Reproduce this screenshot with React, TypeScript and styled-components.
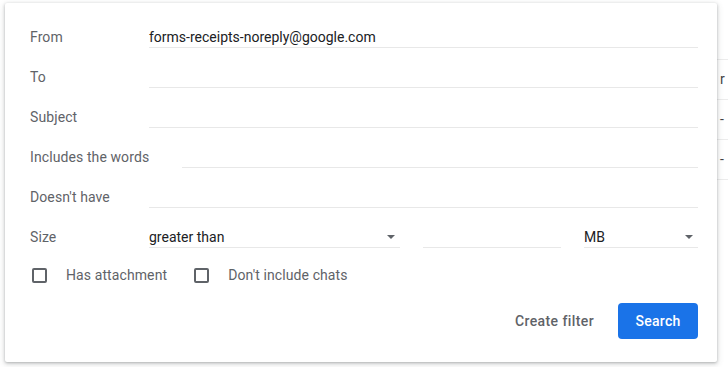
import React from "react";
import styled, { createGlobalStyle } from "styled-components";

const GlobalStyle = createGlobalStyle`
  html, body {
    margin: 0;
    padding: 0;
    background: #fff;
    font-family: Roboto, "Liberation Sans", Arial, sans-serif;
  }
`;

const Page = styled.div`
  display: flex;
  align-items: flex-start;
  width: 728px;
  height: 367px;
  overflow: hidden;
`;

const Dialog = styled.div`
  position: relative;
  z-index: 1;
  flex: 0 0 712px;
  box-sizing: border-box;
  margin: 3px 0 0 5px;
  height: 359px;
  padding: 17px 19px 0 25px;
  background: #fff;
  border-radius: 2px;
  box-shadow: 0 1px 3px rgba(60, 64, 67, 0.35), 0 2px 6px 1px rgba(60, 64, 67, 0.12);
  display: flex;
  flex-direction: column;
`;

const Backdrop = styled.div`
  flex: 1;
  padding-top: 59px;
  display: flex;
  flex-direction: column;
`;

const BackdropRow = styled.div`
  height: 39px;
  border-top: 1px solid #ececec;
  padding-left: 3px;
  font-size: 14px;
  line-height: 39px;
  color: #444;
  white-space: nowrap;
`;

const Row = styled.div`
  display: flex;
  align-items: flex-start;
  margin-bottom: 12px;
`;

const Label = styled.div<{ $wide?: boolean }>`
  flex: 0 0 ${(p) => (p.$wide ? "152px" : "119px")};
  padding-top: 7px;
  font-size: 14px;
  line-height: 20px;
  letter-spacing: 0.1px;
  color: #5f6368;
`;

const Field = styled.div<{ $width?: number }>`
  ${(p) => (p.$width ? `flex: 0 0 ${p.$width}px;` : "flex: 1;")}
  box-sizing: border-box;
  height: 28px;
  padding-top: 7px;
  border-bottom: 1px solid #e8e8e8;
  font-size: 14px;
  line-height: 20px;
  color: #202124;
  display: flex;
  justify-content: space-between;
  align-items: flex-start;
`;

const SizeGroup = styled.div`
  flex: 1;
  display: flex;
  gap: 23px;
`;

const Arrow = styled.span`
  width: 0;
  height: 0;
  margin: 8px 5px 0 0;
  border-left: 4px solid transparent;
  border-right: 4px solid transparent;
  border-top: 4px solid #5f6368;
`;

const Checks = styled.div`
  display: flex;
  align-items: center;
  margin-top: 5px;
  padding-left: 2px;
`;

const CheckItem = styled.label`
  display: flex;
  align-items: center;
  gap: 19px;
  margin-right: 27px;
  font-size: 14px;
  line-height: 20px;
  letter-spacing: 0.1px;
  color: #5f6368;
`;

const Box = styled.span`
  box-sizing: border-box;
  width: 15px;
  height: 15px;
  border: 2px solid #5f6368;
  border-radius: 2px;
`;

const Actions = styled.div`
  display: flex;
  justify-content: flex-end;
  align-items: center;
  gap: 24px;
  margin-top: 18px;
`;

const TextButton = styled.button`
  border: none;
  background: none;
  padding: 0;
  font-family: inherit;
  font-size: 14px;
  font-weight: 500;
  letter-spacing: 0.4px;
  color: #5f6368;
  cursor: pointer;
`;

const PrimaryButton = styled.button`
  width: 80px;
  height: 36px;
  border: none;
  border-radius: 4px;
  background: #1a73e8;
  color: #fff;
  font-family: inherit;
  font-size: 14px;
  font-weight: 500;
  letter-spacing: 0.3px;
  cursor: pointer;
`;

const rows = [
  { label: "From", value: "forms-receipts-noreply@google.com" },
  { label: "To", value: "" },
  { label: "Subject", value: "" },
  { label: "Includes the words", value: "", wide: true },
  { label: "Doesn't have", value: "" },
];

const App: React.FC = () => {
  return (
    <>
      <GlobalStyle />
      <Page>
        <Dialog>
          {rows.map((r) => (
            <Row key={r.label}>
              <Label $wide={r.wide}>{r.label}</Label>
              <Field>{r.value}</Field>
            </Row>
          ))}
          <Row>
            <Label>Size</Label>
            <SizeGroup>
              <Field $width={251}>
                greater than
                <Arrow />
              </Field>
              <Field $width={138} />
              <Field>
                MB
                <Arrow />
              </Field>
            </SizeGroup>
          </Row>
          <Checks>
            <CheckItem>
              <Box />
              Has attachment
            </CheckItem>
            <CheckItem>
              <Box />
              Don't include chats
            </CheckItem>
          </Checks>
          <Actions>
            <TextButton>Create filter</TextButton>
            <PrimaryButton>Search</PrimaryButton>
          </Actions>
        </Dialog>
        <Backdrop>
          <BackdropRow>r</BackdropRow>
          <BackdropRow>-</BackdropRow>
          <BackdropRow>-</BackdropRow>
          <BackdropRow />
        </Backdrop>
      </Page>
    </>
  );
};

export default App;
